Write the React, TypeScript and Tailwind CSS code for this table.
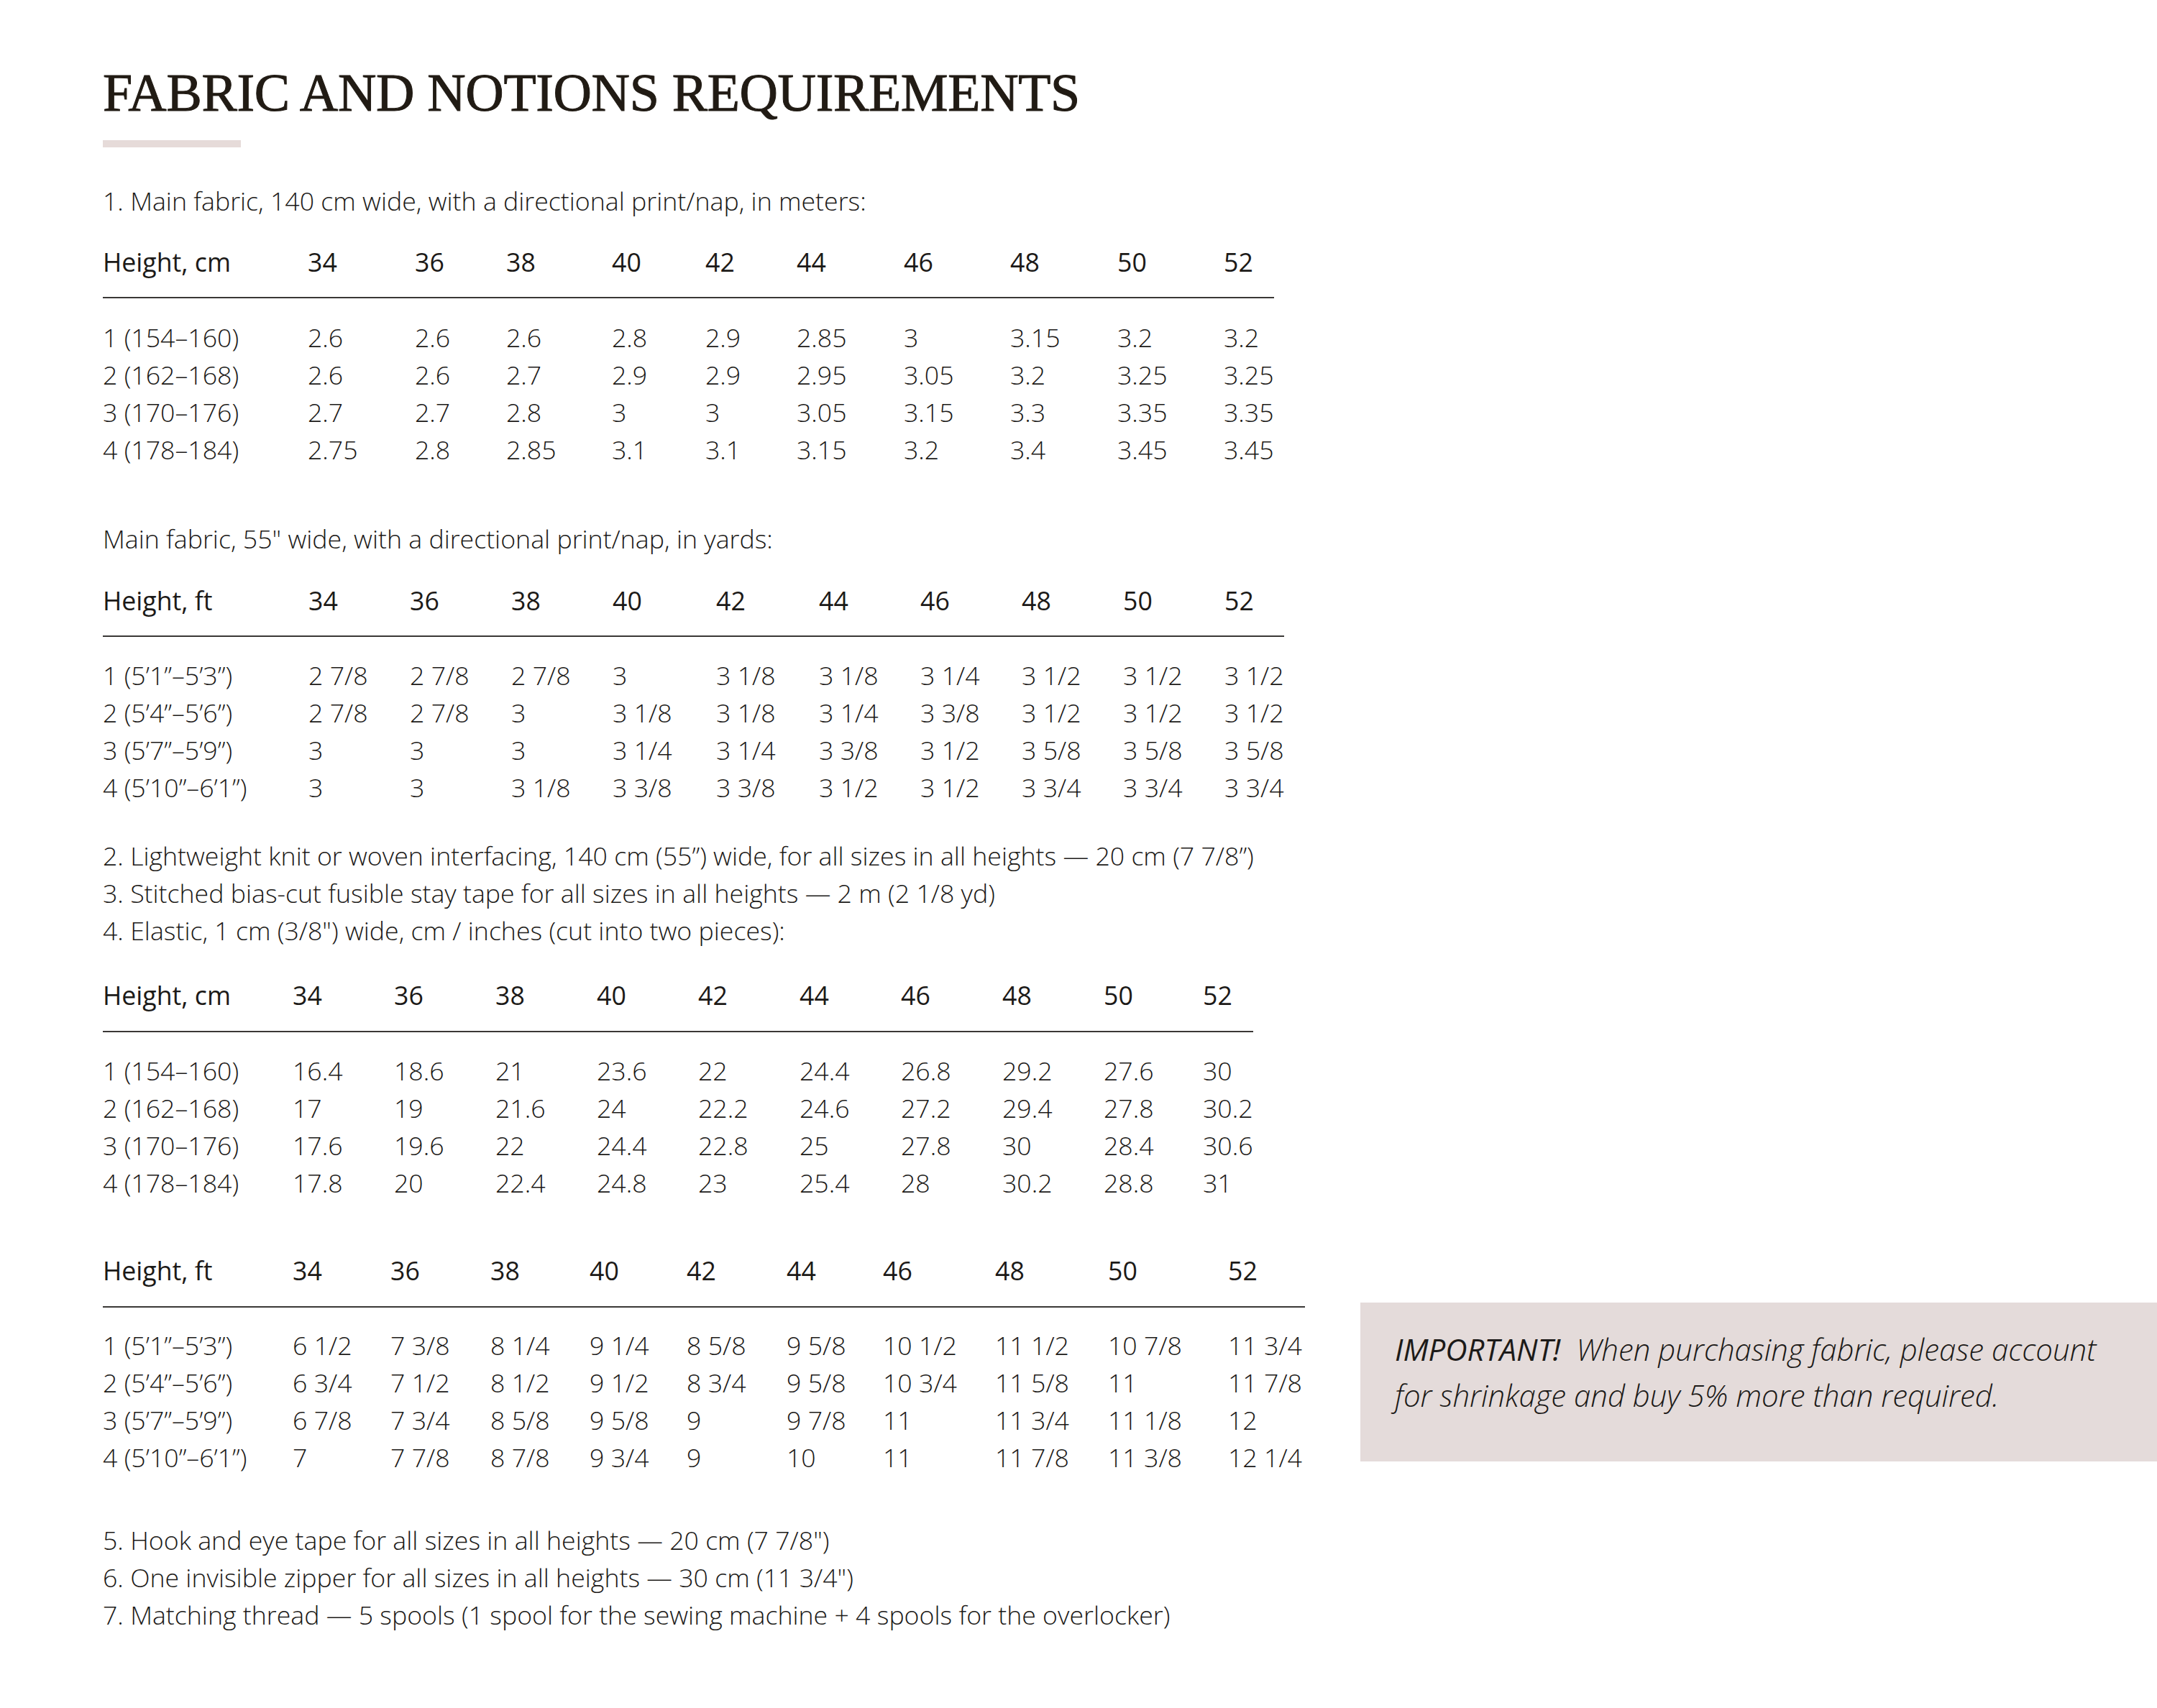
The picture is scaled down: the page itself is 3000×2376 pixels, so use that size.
import React from "react";

type TableProps = {
  cols: string;
  lineW: string;
  label: string;
  rows: [string, string[]][];
  headMt: string;
  lineMt: string;
  rowsMt: string;
};

const sizes = ["34", "36", "38", "40", "42", "44", "46", "48", "50", "52"];

function SizeTable({ cols, lineW, label, rows, headMt, lineMt, rowsMt }: TableProps) {
  return (
    <div>
      <div className={`grid ${cols} ${headMt} text-[35.7px] leading-[52px] font-normal text-[#1c1a18]`}>
        <div>{label}</div>
        {sizes.map((s) => (
          <div key={s}>{s}</div>
        ))}
      </div>
      <div className={`${lineW} ${lineMt} h-[2px] bg-[#3a3836]`} />
      <div className={`${rowsMt} text-[35.7px] leading-[52px] font-light text-[#1c1a18]`}>
        {rows.map(([name, vals]) => (
          <div key={name} className={`grid ${cols} whitespace-nowrap`}>
            <div>{name}</div>
            {vals.map((v, i) => (
              <div key={i}>{v}</div>
            ))}
          </div>
        ))}
      </div>
    </div>
  );
}

const t1: [string, string[]][] = [
  ["1 (154–160)", ["2.6", "2.6", "2.6", "2.8", "2.9", "2.85", "3", "3.15", "3.2", "3.2"]],
  ["2 (162–168)", ["2.6", "2.6", "2.7", "2.9", "2.9", "2.95", "3.05", "3.2", "3.25", "3.25"]],
  ["3 (170–176)", ["2.7", "2.7", "2.8", "3", "3", "3.05", "3.15", "3.3", "3.35", "3.35"]],
  ["4 (178–184)", ["2.75", "2.8", "2.85", "3.1", "3.1", "3.15", "3.2", "3.4", "3.45", "3.45"]],
];

const t2: [string, string[]][] = [
  ["1 (5’1”–5’3”)", ["2 7/8", "2 7/8", "2 7/8", "3", "3 1/8", "3 1/8", "3 1/4", "3 1/2", "3 1/2", "3 1/2"]],
  ["2 (5’4”–5’6”)", ["2 7/8", "2 7/8", "3", "3 1/8", "3 1/8", "3 1/4", "3 3/8", "3 1/2", "3 1/2", "3 1/2"]],
  ["3 (5’7”–5’9”)", ["3", "3", "3", "3 1/4", "3 1/4", "3 3/8", "3 1/2", "3 5/8", "3 5/8", "3 5/8"]],
  ["4 (5’10”–6’1”)", ["3", "3", "3 1/8", "3 3/8", "3 3/8", "3 1/2", "3 1/2", "3 3/4", "3 3/4", "3 3/4"]],
];

const t3: [string, string[]][] = [
  ["1 (154–160)", ["16.4", "18.6", "21", "23.6", "22", "24.4", "26.8", "29.2", "27.6", "30"]],
  ["2 (162–168)", ["17", "19", "21.6", "24", "22.2", "24.6", "27.2", "29.4", "27.8", "30.2"]],
  ["3 (170–176)", ["17.6", "19.6", "22", "24.4", "22.8", "25", "27.8", "30", "28.4", "30.6"]],
  ["4 (178–184)", ["17.8", "20", "22.4", "24.8", "23", "25.4", "28", "30.2", "28.8", "31"]],
];

const t4: [string, string[]][] = [
  ["1 (5’1”–5’3”)", ["6 1/2", "7 3/8", "8 1/4", "9 1/4", "8 5/8", "9 5/8", "10 1/2", "11 1/2", "10 7/8", "11 3/4"]],
  ["2 (5’4”–5’6”)", ["6 3/4", "7 1/2", "8 1/2", "9 1/2", "8 3/4", "9 5/8", "10 3/4", "11 5/8", "11", "11 7/8"]],
  ["3 (5’7”–5’9”)", ["6 7/8", "7 3/4", "8 5/8", "9 5/8", "9", "9 7/8", "11", "11 3/4", "11 1/8", "12"]],
  ["4 (5’10”–6’1”)", ["7", "7 7/8", "8 7/8", "9 3/4", "9", "10", "11", "11 7/8", "11 3/8", "12 1/4"]],
];

export default function App() {
  return (
    <div className="min-h-[2376px] w-[3000px] bg-white font-['Open_Sans',sans-serif] text-[#1c1a18]">
      <div className="flex flex-col pl-[143px] pt-[93px]">
        <h1 className="font-['Liberation_Serif',serif] text-[74px] leading-[73px] font-normal tracking-[-0.35px] text-[#211b14] whitespace-nowrap [-webkit-text-stroke:1px_#211b14]">
          FABRIC AND NOTIONS REQUIREMENTS
        </h1>
        <div className="mt-[29px] h-[10px] w-[192px] bg-[#e6dbd9]" />

        <p className="mt-[48px] text-[35.7px] leading-[52px] font-light">
          1. Main fabric, 140 cm wide, with a directional print/nap, in meters:
        </p>
        <SizeTable
          cols="grid-cols-[285px_149px_127px_147px_130px_127px_149px_148px_149px_148px_70px]"
          lineW="w-[1629px]"
          label="Height, cm"
          rows={t1}
          headMt="mt-[33px]"
          lineMt="mt-[23px]"
          rowsMt="mt-[28px]"
        />

        <p className="mt-[72px] text-[35.7px] leading-[52px] font-light">
          Main fabric, 55" wide, with a directional print/nap, in yards:
        </p>
        <SizeTable
          cols="grid-cols-[286px_141px_141px_141px_144px_143px_141px_141px_141px_141px_83px]"
          lineW="w-[1643px]"
          label="Height, ft"
          rows={t2}
          headMt="mt-[34px]"
          lineMt="mt-[23px]"
          rowsMt="mt-[27px]"
        />

        <div className="mt-[43px] text-[35.7px] leading-[52px] font-light">
          <p>2. Lightweight knit or woven interfacing, 140 cm (55”) wide, for all sizes in all heights — 20 cm (7 7/8”)</p>
          <p>3. Stitched bias-cut fusible stay tape for all sizes in all heights — 2 m (2 1/8 yd)</p>
          <p>4. Elastic, 1 cm (3/8") wide, cm / inches (cut into two pieces):</p>
        </div>
        <SizeTable
          cols="grid-cols-[264px_141px_141px_141px_141px_141px_141px_141px_141px_138px_70px]"
          lineW="w-[1600px]"
          label="Height, cm"
          rows={t3}
          headMt="mt-[38px]"
          lineMt="mt-[24px]"
          rowsMt="mt-[27px]"
        />

        <div className="mt-[70px] flex items-start">
          <div className="w-[1672px] shrink-0">
            <SizeTable
              cols="grid-cols-[264px_136px_139px_138px_135px_139px_134px_156px_157px_167px_107px]"
              lineW="w-[1672px]"
              label="Height, ft"
              rows={t4}
              headMt="mt-0"
              lineMt="mt-[24px]"
              rowsMt="mt-[26px]"
            />
          </div>
          <div className="ml-[77px] mt-[71px] h-[221px] flex-1 bg-[#e4dbda] pl-[48px] pt-[33px]">
            <p className="text-[42px] leading-[64px] italic font-light text-[#1c1a18] whitespace-nowrap">
              <span className="font-normal">IMPORTANT!</span>
              {"\u00a0 When purchasing fabric, please account"}
              <br />
              for shrinkage and buy 5% more than required.
            </p>
          </div>
        </div>

        <div className="mt-[63px] text-[35.7px] leading-[52px] font-light">
          <p>5. Hook and eye tape for all sizes in all heights — 20 cm (7 7/8")</p>
          <p>6. One invisible zipper for all sizes in all heights — 30 cm (11 3/4")</p>
          <p>7. Matching thread — 5 spools (1 spool for the sewing machine + 4 spools for the overlocker)</p>
        </div>
      </div>
    </div>
  );
}
